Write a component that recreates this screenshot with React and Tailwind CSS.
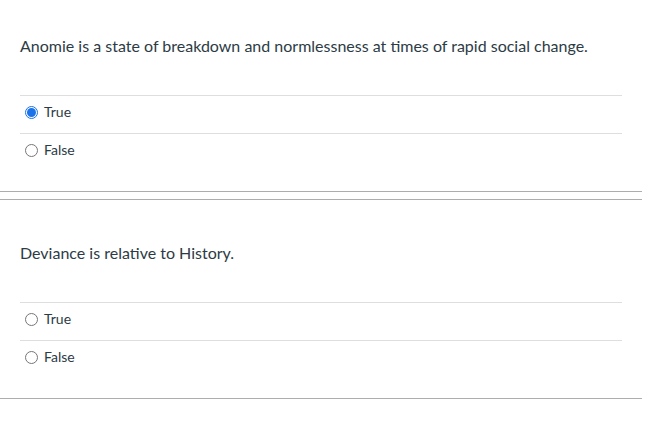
const questions = [
  {
    text: "Anomie is a state of breakdown and normlessness at times of rapid social change.",
    answer: "True",
  },
  {
    text: "Deviance is relative to History.",
    answer: null,
  },
];

function Radio({ checked }) {
  return checked ? (
    <span className="flex h-[13px] w-[13px] items-center justify-center rounded-full border border-[#1a73e8] bg-white">
      <span className="h-[9px] w-[9px] rounded-full bg-[#1a73e8]" />
    </span>
  ) : (
    <span className="h-[13px] w-[13px] rounded-full border border-[#767676] bg-white" />
  );
}

function Question({ q, first }) {
  return (
    <div
      className={
        "w-[642px] border-b border-[#adadad] pb-[20px] " +
        (first ? "pt-[36px]" : "border-t pt-[43px]")
      }
    >
      <p className="px-[20px] text-[16px] leading-[20px] text-[#2d3b45]">{q.text}</p>
      <div className="mx-[20px] mt-[39px] w-[602px]">
        {["True", "False"].map((opt) => (
          <div
            key={opt}
            className="flex items-center gap-[6px] border-t border-[#dedede] pt-[6px] pb-[11px] pl-[5px]"
          >
            <Radio checked={q.answer === opt} />
            <span className="text-[14px] leading-[20px] text-[#2d3b45]">{opt}</span>
          </div>
        ))}
      </div>
    </div>
  );
}

export default function App() {
  return (
    <div className="min-h-[430px] bg-white font-['Lato','Liberation_Sans',sans-serif]">
      {questions.map((q, i) => (
        <div key={i} className={i > 0 ? "mt-[7px]" : ""}>
          <Question q={q} first={i === 0} />
        </div>
      ))}
    </div>
  );
}
